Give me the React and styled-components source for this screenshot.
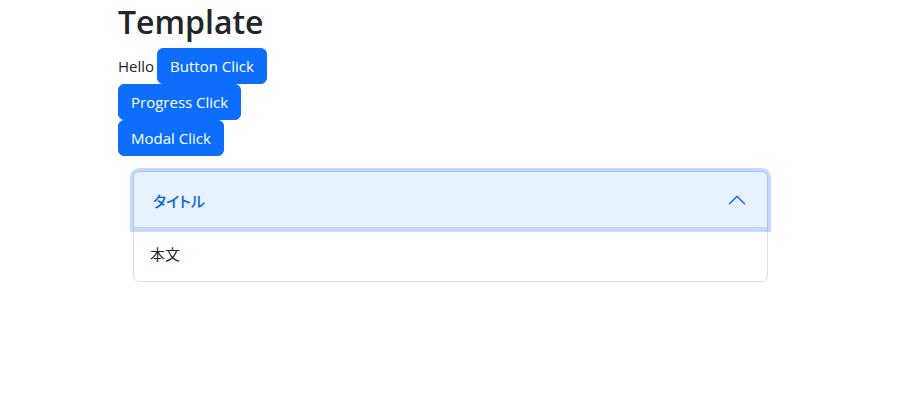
import React from 'react';
import styled, { createGlobalStyle } from 'styled-components';

const GlobalStyle = createGlobalStyle`
  * {
    box-sizing: border-box;
  }
  body {
    margin: 0;
    background: #fff;
    color: #212529;
    font-family: "Open Sans", "Noto Sans", "Noto Sans CJK JP", sans-serif;
    font-size: 15px;
    line-height: 1.5;
  }
`;

const Container = styled.div`
  max-width: 665px;
  margin: 0 auto;
`;

const Title = styled.h1`
  margin: 0 0 5px;
  font-size: 32px;
  font-weight: 600;
  line-height: 43px;
`;

const Row = styled.div`
  display: flex;
  align-items: center;
  gap: 3px;
`;

const Button = styled.button`
  display: inline-block;
  height: 36px;
  padding: 0 12px;
  border: 1px solid #0d6efd;
  border-radius: 6px;
  background: #0d6efd;
  color: #fff;
  font-family: inherit;
  font-size: 15px;
  line-height: 22px;
  cursor: pointer;
`;

const Accordion = styled.div`
  margin: 15px;
  border: 1px solid #dee2e6;
  border-radius: 6px;
`;

const Header = styled.button`
  position: relative;
  z-index: 2;
  display: flex;
  align-items: center;
  justify-content: space-between;
  width: 100%;
  height: 56px;
  padding: 0 20px 0 19px;
  border: 0;
  border-radius: 5px 5px 0 0;
  background: #e7f1ff;
  color: #0c63e4;
  font-family: "Noto Sans CJK JP", sans-serif;
  font-feature-settings: "palt";
  font-size: 15px;
  font-weight: 500;
  text-align: left;
  box-shadow: inset 0 -1px 0 rgba(0, 0, 0, 0.125), 0 0 0 4px rgba(13, 110, 253, 0.25);
  cursor: pointer;
`;

const Chevron = styled.svg`
  width: 20px;
  height: 20px;
  transform: rotate(180deg);
`;

const Body = styled.div`
  padding: 14px 16px 15px;
  font-family: "Noto Sans CJK JP", sans-serif;
  font-size: 15px;
  line-height: 24px;
`;

export default function App() {
  return (
    <>
      <GlobalStyle />
      <Container>
        <Title>Template</Title>
        <Row>
          <span>Hello</span>
          <Button type="button">Button Click</Button>
        </Row>
        <div>
          <Button type="button">Progress Click</Button>
        </div>
        <div>
          <Button type="button">Modal Click</Button>
        </div>
        <Accordion>
          <Header type="button">
            <span>タイトル</span>
            <Chevron viewBox="0 0 16 16" fill="#0c63e4">
              <path d="M1.646 4.646a.5.5 0 0 1 .708 0L8 10.293l5.646-5.647a.5.5 0 0 1 .708.708l-6 6a.5.5 0 0 1-.708 0l-6-6a.5.5 0 0 1 0-.708z" />
            </Chevron>
          </Header>
          <Body>本文</Body>
        </Accordion>
      </Container>
    </>
  );
}
